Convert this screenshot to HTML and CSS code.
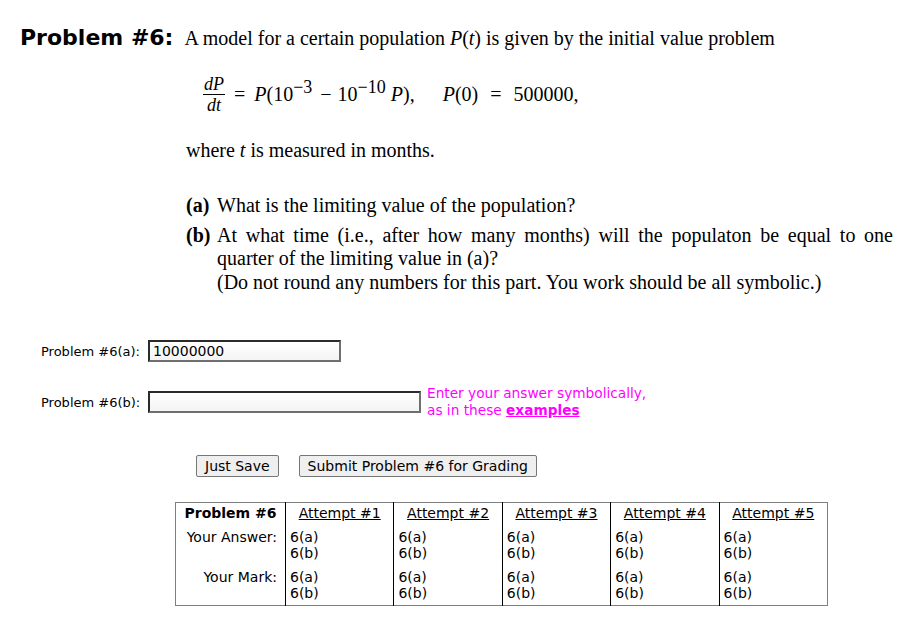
FILE: index.html
```html
<!DOCTYPE html>
<html>
<head>
<meta charset="utf-8">
<link rel="stylesheet" href="styles.css">
</head>
<body>
<div class="page">
  <div class="problem">
    <div class="title-row">
      <span class="title">Problem #6:</span>
      <span class="serif intro">A model for a certain population <i>P</i>(<i>t</i>) is given by the initial value problem</span>
    </div>
    <div class="body serif">
      <div class="equation">
        <span class="frac"><span class="num"><i>dP</i></span><span class="den"><i>dt</i></span></span>
        <span class="eq"><span class="op">=</span><i>P</i>(10<sup>−3</sup><span class="minus">−</span>10<sup class="sp">−10</sup><i>P</i>),<span class="gap"></span><i>P</i>(0)<span class="op wide">=</span>500000,</span>
      </div>
      <p class="where">where <i>t</i> is measured in months.</p>
      <div class="parts">
        <div class="part"><b>(a)</b><span>What is the limiting value of the population?</span></div>
        <div class="part"><b>(b)</b><span class="just">At what time (i.e., after how many months) will the populaton be equal to one quarter of the limiting value in (a)?<br>(Do not round any numbers for this part. You work should be all symbolic.)</span></div>
      </div>
    </div>
  </div>

  <div class="answers">
    <div class="ans-row">
      <label class="lbl">Problem #6(a):</label>
      <input class="field short" type="text" value="10000000">
    </div>
    <div class="ans-row">
      <label class="lbl">Problem #6(b):</label>
      <input class="field long" type="text" value="">
      <div class="hint">Enter your answer symbolically,<br>as in these <a href="#">examples</a></div>
    </div>
  </div>

  <div class="buttons">
    <button class="btn">Just Save</button>
    <button class="btn">Submit Problem #6 for Grading</button>
  </div>

  <table class="attempts">
    <colgroup>
      <col class="c0"><col><col><col><col><col>
    </colgroup>
    <tr class="head">
      <th>Problem #6</th>
      <td><a href="#">Attempt #1</a></td>
      <td><a href="#">Attempt #2</a></td>
      <td><a href="#">Attempt #3</a></td>
      <td><a href="#">Attempt #4</a></td>
      <td><a href="#">Attempt #5</a></td>
    </tr>
    <tr class="data">
      <th class="rl">Your Answer:</th>
      <td>6(a)<br>6(b)</td><td>6(a)<br>6(b)</td><td>6(a)<br>6(b)</td><td>6(a)<br>6(b)</td><td>6(a)<br>6(b)</td>
    </tr>
    <tr class="data last">
      <th class="rl">Your Mark:</th>
      <td>6(a)<br>6(b)</td><td>6(a)<br>6(b)</td><td>6(a)<br>6(b)</td><td>6(a)<br>6(b)</td><td>6(a)<br>6(b)</td>
    </tr>
  </table>
</div>
</body>
</html>
```

FILE: styles.css
```css
html, body {
  margin: 0;
  padding: 0;
  background: #ffffff;
}
body {
  font-family: "DejaVu Sans", Verdana, sans-serif;
  font-size: 14px;
  color: #000;
}
.page {
  padding: 25px 0 0 20px;
}
.serif {
  font-family: "Liberation Serif", "Times New Roman", serif;
  font-size: 20px;
}
.title-row {
  display: flex;
  align-items: baseline;
  gap: 11px;
}
.title {
  font-weight: bold;
  font-size: 22px;
}
.body {
  padding-left: 166px;
  width: 707px;
}
.equation {
  display: flex;
  align-items: center;
  padding-left: 17px;
  margin-top: 21px;
  height: 46px;
}
.frac {
  display: inline-flex;
  flex-direction: column;
  align-items: center;
  font-size: 18px;
  margin-right: 0;
}
.frac .num {
  border-bottom: 1px solid #000;
  padding: 0 1px 1px;
  line-height: 18px;
}
.frac .den {
  line-height: 18px;
  padding-top: 1px;
}
.eq {
  font-size: 20px;
}
.eq .op {
  margin: 0 9px;
}
.eq .op.wide {
  margin: 0 12px;
}
.eq .minus {
  margin: 0 6px 0 8px;
}
.eq .gap {
  display: inline-block;
  width: 28px;
}
.eq sup {
  font-size: 18px;
  vertical-align: 8px;
  line-height: 0;
}
.eq sup.sp {
  margin-right: 5px;
}
.where {
  margin: 22px 0 0;
}
.parts {
  margin-top: 32px;
  display: flex;
  flex-direction: column;
  gap: 6px;
}
.part {
  display: grid;
  grid-template-columns: 31px 1fr;
  line-height: 23.5px;
}
.just {
  text-align: justify;
}
.answers {
  margin-top: 46px;
  padding-left: 21px;
  display: flex;
  flex-direction: column;
  gap: 23px;
}
.ans-row {
  display: flex;
  align-items: center;
  gap: 10px;
}
.lbl {
  width: 97px;
  white-space: nowrap;
  font-size: 13px;
}
.field {
  box-sizing: border-box;
  height: 22px;
  border-width: 2px;
  border-style: solid;
  border-color: #2b2b2b #6f6f6f #6f6f6f #2b2b2b;
  font-family: "DejaVu Sans", Verdana, sans-serif;
  font-size: 14px;
  padding: 0 3px;
  margin: 0;
  background: linear-gradient(#ffffff, #f4f4f4);
}
.short { width: 193px; }
.long { width: 273px; }
.hint {
  color: #ff00ff;
  line-height: 17px;
  margin-left: -4px;
  font-size: 13.7px;
}
.hint a {
  color: #ff00ff;
  font-weight: bold;
}
.buttons {
  margin-top: 36px;
  padding-left: 176px;
  display: flex;
  gap: 20px;
}
.btn {
  height: 22px;
  box-sizing: border-box;
  font-family: "DejaVu Sans", Verdana, sans-serif;
  font-size: 14px;
  color: #000;
  background: #efefef;
  border: 1px solid #767676;
  border-radius: 2px;
  padding: 0 8px;
}
.attempts {
  margin: 25px 0 0 155px;
  border-collapse: collapse;
  border: 1px solid #808080;
  table-layout: fixed;
  width: 653px;
}
.c0 { width: 110px; }
.attempts th, .attempts td {
  padding: 0 8px;
  vertical-align: top;
  line-height: 16px;
  white-space: nowrap;
}
.attempts td {
  border-left: 1px solid #000;
  text-align: left;
  padding-left: 4px;
}
.attempts .head td {
  text-align: center;
  padding-left: 8px;
}
.attempts .head th, .attempts .head td {
  padding-top: 2px;
  padding-bottom: 6px;
}
.attempts th {
  text-align: right;
  font-weight: normal;
}
.attempts .head th {
  font-weight: bold;
  text-align: center;
}
.attempts a {
  color: #000;
}
.attempts .data td, .attempts .data th {
  padding-top: 2px;
  padding-bottom: 6px;
}
.attempts .data.last td, .attempts .data.last th {
  padding-bottom: 4px;
}
```
